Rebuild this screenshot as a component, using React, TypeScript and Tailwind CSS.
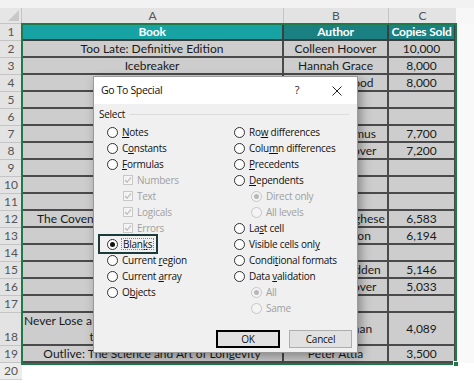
import React from "react";

type Row = { n: number; h?: number; a?: React.ReactNode; b?: string; c?: string; header?: boolean };

const rows: Row[] = [
  { n: 1, a: "Book", b: "Author", c: "Copies Sold", header: true },
  { n: 2, a: "Too Late: Definitive Edition", b: "Colleen Hoover", c: "10,000" },
  { n: 3, a: "Icebreaker", b: "Hannah Grace", c: "8,000" },
  { n: 4, a: "Check & Mate", b: "Ali Hazelwood", c: "8,000" },
  { n: 5 },
  { n: 6 },
  { n: 7, a: "Lessons in Chemistry", b: "Bonnie Garmus", c: "7,700" },
  { n: 8, a: "It Ends with Us", b: "Colleen Hoover", c: "7,200" },
  { n: 9 },
  { n: 10 },
  { n: 11 },
  { n: 12, a: "The Covenant of Water (Oprah's Book Club)", b: "Abraham Verghese", c: "6,583" },
  { n: 13, a: "First Lie Wins", b: "Ashley Elston", c: "6,194" },
  { n: 14 },
  { n: 15, a: "The Housemaid", b: "Freida McFadden", c: "5,146" },
  { n: 16, a: "It Starts with Us", b: "Colleen Hoover", c: "5,033" },
  { n: 17 },
  {
    n: 18,
    h: 33,
    a: (
      <>
        Never Lose a Customer Again: Turn Any Sale Into
        <br />
        to Lifelong Loyalty Now
      </>
    ),
    b: "Joey Coleman",
    c: "4,089",
  },
  { n: 19, a: "Outlive: The Science and Art of Longevity", b: "Peter Attia", c: "3,500" },
];

function Radio({ checked, disabled }: { checked?: boolean; disabled?: boolean }) {
  return (
    <span
      className={
        disabled
          ? "w-[11px] h-[11px] rounded-full border border-[#c6c6c6] bg-[#f4f4f4] flex items-center justify-center shrink-0"
          : "w-[11px] h-[11px] rounded-full border border-[#303030] bg-white flex items-center justify-center shrink-0"
      }
    >
      {checked && (
        <span
          className={
            disabled ? "w-[5px] h-[5px] rounded-full bg-[#b8b8b8]" : "w-[5px] h-[5px] rounded-full bg-[#111]"
          }
        />
      )}
    </span>
  );
}

function Check() {
  return (
    <span className="w-[10px] h-[10px] border border-[#c8c8c8] bg-[#f4f4f4] flex items-center justify-center shrink-0">
      <svg width="8" height="8" viewBox="0 0 8 8">
        <path d="M1 4.2 L3 6.2 L7 1.5" fill="none" stroke="#b4b4b4" strokeWidth="1.1" />
      </svg>
    </span>
  );
}

function Opt({ children, checked }: { children: React.ReactNode; checked?: boolean }) {
  return (
    <div className="h-4 flex items-center gap-[4px] text-[#111]">
      <Radio checked={checked} />
      <span className="leading-none whitespace-nowrap">{children}</span>
    </div>
  );
}

function SubRadio({ children, checked }: { children: React.ReactNode; checked?: boolean }) {
  return (
    <div className="h-4 flex items-center gap-[4px] pl-[17px] text-[#a0a0a0]">
      <Radio checked={checked} disabled />
      <span className="leading-none whitespace-nowrap">{children}</span>
    </div>
  );
}

function SubCheck({ children }: { children: React.ReactNode }) {
  return (
    <div className="h-4 flex items-center gap-[4px] pl-[16px] text-[#a0a0a0]">
      <Check />
      <span className="leading-none whitespace-nowrap">{children}</span>
    </div>
  );
}

function Dialog() {
  return (
    <div className="absolute left-[93px] top-[76px] w-[265px] h-[277px] flex flex-col border border-[#9a9a9a] shadow-[3px_4px_10px_rgba(0,0,0,0.35)] font-['Segoe_UI','Open_Sans',sans-serif] text-[10px] tracking-[-0.25px]">
      <div className="h-[27px] bg-white flex items-center">
        <span className="flex-1 pl-[7px] text-[10.5px] tracking-[-0.35px] text-[#111]">Go To Special</span>
        <span className="w-[40px] text-center text-[11px] text-[#222]">?</span>
        <span className="w-[40px] flex justify-center">
          <svg width="10" height="10" viewBox="0 0 10 10">
            <path d="M0.5 0.5 L9.5 9.5 M9.5 0.5 L0.5 9.5" stroke="#222" strokeWidth="1" />
          </svg>
        </span>
      </div>
      <div className="flex-1 bg-[#f0f0f0] flex flex-col">
        <div className="h-5 flex items-center gap-1 pl-[5px] pr-[8px]">
          <span className="text-[#111]">Select</span>
          <div className="flex-1 h-px bg-[#dcdcdc] mt-[1px]" />
        </div>
        <div className="flex pl-[13px]">
          <div className="w-[127px] flex flex-col">
            <Opt>
              <u>N</u>otes
            </Opt>
            <Opt>
              C<u>o</u>nstants
            </Opt>
            <Opt>
              <u>F</u>ormulas
            </Opt>
            <SubCheck>Numbers</SubCheck>
            <SubCheck>Text</SubCheck>
            <SubCheck>Logicals</SubCheck>
            <SubCheck>Errors</SubCheck>
            <div className="h-4 flex items-center gap-[4px] text-[#111] relative">
              <span className="absolute -left-[9px] -top-[2px] w-[60px] h-[20px] border-2 border-[#1b3a3a]" />
              <Radio checked />
              <span className="leading-none whitespace-nowrap outline outline-1 outline-dotted outline-[#888] px-[1px]">
                Blan<u>k</u>s
              </span>
            </div>
            <Opt>
              Current <u>r</u>egion
            </Opt>
            <Opt>
              Current <u>a</u>rray
            </Opt>
            <Opt>
              O<u>b</u>jects
            </Opt>
          </div>
          <div className="flex flex-col">
            <Opt>
              Ro<u>w</u> differences
            </Opt>
            <Opt>
              Colu<u>m</u>n differences
            </Opt>
            <Opt>
              <u>P</u>recedents
            </Opt>
            <Opt>
              <u>D</u>ependents
            </Opt>
            <SubRadio checked>Direct only</SubRadio>
            <SubRadio>All levels</SubRadio>
            <Opt>
              La<u>s</u>t cell
            </Opt>
            <Opt>
              Visible cells onl<u>y</u>
            </Opt>
            <Opt>
              Condi<u>t</u>ional formats
            </Opt>
            <Opt>
              Data <u>v</u>alidation
            </Opt>
            <SubRadio checked>All</SubRadio>
            <SubRadio>Same</SubRadio>
          </div>
        </div>
        <div className="flex justify-end gap-[9px] pr-[5px] mt-[14px]">
          <button className="w-[64px] h-[18px] border-2 border-black bg-[#e1e1e1] text-[#111] leading-none">
            OK
          </button>
          <button className="w-[63px] h-[18px] border border-[#adadad] bg-[#e1e1e1] text-[#111] leading-none">
            Cancel
          </button>
        </div>
      </div>
    </div>
  );
}

export default function App() {
  return (
    <div className="w-[474px] h-[383px] relative overflow-hidden bg-white font-['Lato',sans-serif]">
      <div className="h-2 bg-[#f2f2f2]" />
      <div className="grid grid-cols-[22px_262px_105px_67px_18px]">
        {/* column header */}
        <div className="h-4 bg-[#e6e6e6] border-r border-b border-[#c4c4c4] relative">
          <svg className="absolute right-[2px] bottom-[2px]" width="11" height="11" viewBox="0 0 11 11">
            <path d="M11 0 L11 11 L0 11 Z" fill="#c8c8c8" />
          </svg>
        </div>
        <div className="h-4 bg-[#e3e3e3] border-r border-b border-[#c4c4c4] flex items-center justify-center text-[12px] text-[#555]">
          A
        </div>
        <div className="h-4 bg-[#e3e3e3] border-r border-b border-[#c4c4c4] flex items-center justify-center text-[12px] text-[#555]">
          B
        </div>
        <div className="h-4 bg-[#e3e3e3] border-b border-[#c4c4c4] flex items-center justify-center text-[12px] text-[#555]">
          C
        </div>
        <div className="h-4 bg-[#f7f7f7]" />

        {rows.map((r) => {
          const hc = r.h === 33 ? "h-[33px]" : "h-[17px]";
          const cellBase = r.header
            ? "border-b-2 border-r-2 border-[#3e3e3e] flex items-center justify-center text-[12px] font-bold text-white leading-none whitespace-nowrap tracking-[-0.2px]"
            : "border-b-2 border-r-2 border-[#4a4a4a] bg-[#cdcdcd] flex items-center justify-center text-center text-[12px] text-[#1a1a1a] leading-[16px] whitespace-nowrap overflow-hidden";
          return (
            <React.Fragment key={r.n}>
              <div
                className={`${hc} bg-[#e3e3e3] border-b border-[#c4c4c4] flex items-end justify-center text-[12px] text-[#555] leading-none pb-[2px]`}
              >
                {r.n}
              </div>
              <div className={`${hc} ${cellBase} ${r.header ? "bg-[#17a3a3]" : ""}`}>
                <span>{r.a}</span>
              </div>
              <div className={`${hc} ${cellBase} ${r.header ? "bg-[#1b8081]" : ""}`}>
                <span>{r.b}</span>
              </div>
              <div className={`${hc} ${cellBase} ${r.header ? "bg-[#1b8081]" : ""}`}>
                <span>{r.c}</span>
              </div>
              <div className={`${hc} bg-[#f9f9f9]`} />
            </React.Fragment>
          );
        })}
        <div className="h-[17px] bg-[#ececec] border-b border-[#d0d0d0] flex items-end justify-center text-[12px] text-[#555] leading-none pb-[2px]">
          20
        </div>
        <div className="h-[17px] bg-white" />
        <div className="h-[17px] bg-white" />
        <div className="h-[17px] bg-white" />
        <div className="h-[17px] bg-white" />
      </div>

      {/* selection border */}
      <div className="absolute left-[21px] top-[23px] w-[436px] h-[342px] border-2 border-[#1f7a4a] pointer-events-none" />
      <div className="absolute left-[453px] top-[361px] w-[6px] h-[6px] bg-[#1f7a4a] border border-white" />

      <Dialog />
    </div>
  );
}
